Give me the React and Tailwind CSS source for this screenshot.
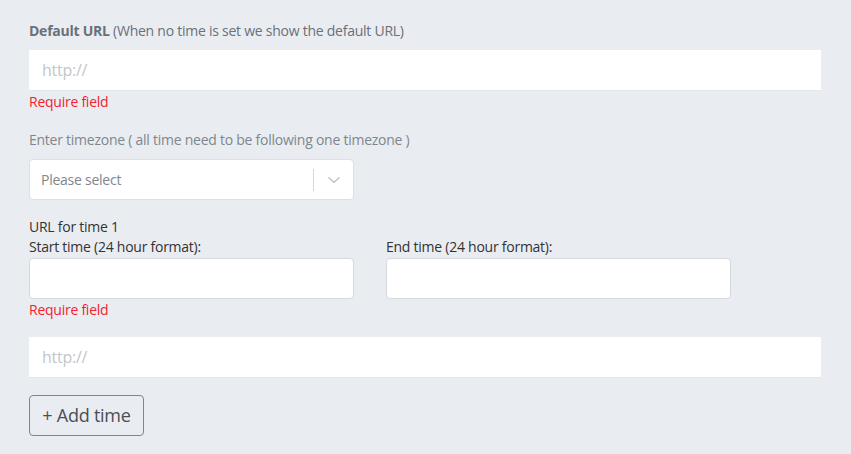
export default function App() {
  return (
    <div className="min-h-[454px] w-full bg-[#e9edf1] px-[29px] pt-[21px] font-['Open_Sans',sans-serif] tracking-[-0.25px]">
      {/* Default URL */}
      <div className="w-[792px]">
        <p className="text-[14px] leading-[20px] text-[#6a7079]">
          <span className="font-bold">Default URL</span> (When no time is set we show the default URL)
        </p>
        <input
          type="text"
          placeholder="http://"
          className="mt-[9px] block h-[41px] w-full border-b border-[#e3e6ea] bg-white px-[13px] text-[16px] text-[#333] placeholder:text-[#c3c6ca] outline-none"
        />
        <p className="mt-[1px] text-[14px] leading-[20px] text-[#f5222d]">Require field</p>
      </div>

      {/* Timezone */}
      <p className="mt-[18px] text-[14px] leading-[20px] text-[#80868d]">
        Enter timezone ( all time need to be following one timezone )
      </p>
      <div className="mt-[9px] flex h-[41px] w-[325px] items-center rounded-[4px] border border-[#dcdfe3] bg-white">
        <span className="flex-1 pl-[11px] text-[14px] text-[#80868d]">Please select</span>
        <span className="h-[22px] w-px bg-[#d5d8dc]" />
        <span className="flex w-[39px] items-center justify-center">
          <svg width="16" height="16" viewBox="0 0 20 20" fill="none" stroke="#b4b8bd" strokeWidth="1.6" strokeLinecap="round" strokeLinejoin="round">
            <path d="M3.5 7l6.5 6 6.5-6" />
          </svg>
        </span>
      </div>

      {/* URL for time 1 */}
      <p className="mt-[17px] text-[14px] leading-[20px] text-[#333]">URL for time 1</p>
      <div className="flex gap-[32px]">
        <div>
          <p className="text-[14px] leading-[20px] text-[#333]">Start time (24 hour format):</p>
          <input
            type="text"
            className="mt-[1px] block h-[41px] w-[325px] rounded-[4px] border border-[#d5d8dc] bg-white outline-none"
          />
          <p className="mt-[1px] text-[14px] leading-[20px] text-[#f5222d]">Require field</p>
        </div>
        <div>
          <p className="text-[14px] leading-[20px] text-[#333]">End time (24 hour format):</p>
          <input
            type="text"
            className="mt-[1px] block h-[41px] w-[345px] rounded-[4px] border border-[#d5d8dc] bg-white outline-none"
          />
        </div>
      </div>

      <input
        type="text"
        placeholder="http://"
        className="mt-[17px] block h-[41px] w-[792px] border-b border-[#e3e6ea] bg-white px-[13px] text-[16px] text-[#333] placeholder:text-[#c3c6ca] outline-none"
      />

      <button className="mt-[17px] h-[41px] w-[115px] rounded-[4px] border border-[#80858c] text-[18px] text-[#4a4f55]">
        + Add time
      </button>
    </div>
  );
}
